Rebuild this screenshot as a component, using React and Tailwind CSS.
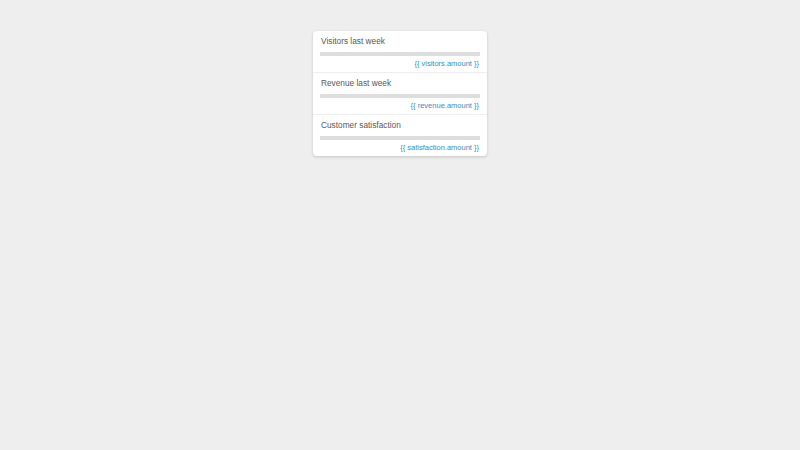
const stats = [
  { label: 'Visitors last week', amount: '{{ visitors.amount }}' },
  { label: 'Revenue last week', amount: '{{ revenue.amount }}' },
  { label: 'Customer satisfaction', amount: '{{ satisfaction.amount }}' },
];

export default function App() {
  return (
    <div className="min-h-[450px] w-full bg-[#eeeeee] pt-[31px] font-['Liberation_Sans',Arial,sans-serif]">
      <div className="mx-auto w-[174px] rounded-[4px] bg-white shadow-[0_1px_3px_rgba(0,0,0,0.18)]">
        {stats.map((s, i) => (
          <div
            key={s.label}
            className={`px-[7px] pt-[4px] pb-[3px] ${i < stats.length - 1 ? 'border-b border-[#eeeeee]' : ''}`}
          >
            <div className="pl-[1px] text-[8.3px] leading-[12px] text-[#585858]">{s.label}</div>
            <div className="mt-[5px] h-[4px] w-full bg-[#dddddd]"></div>
            <div className="mt-[2px] pr-[1px] text-right text-[7.5px] leading-[11px] text-[#3b8cbf]">{s.amount}</div>
          </div>
        ))}
      </div>
    </div>
  );
}
